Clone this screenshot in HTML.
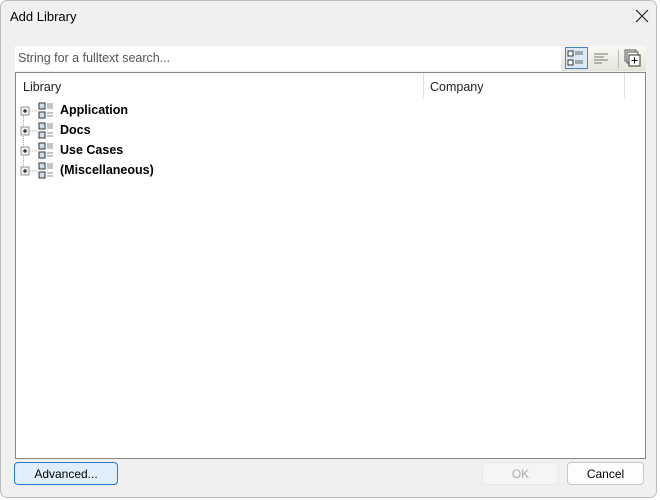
<!DOCTYPE html>
<html><head><style>
body{margin:0;width:660px;height:500px;background:#fff;font-family:"Liberation Sans",sans-serif;overflow:hidden;position:relative}
.win{position:absolute;left:0;top:0;width:657px;height:498px;background:#f0f0f0;border:1px solid #bdbdbd;border-radius:7px;box-sizing:border-box}
.title{position:absolute;left:9px;top:8px;font-size:13px;color:#000}
.x{position:absolute;left:634px;top:8px}
.search{position:absolute;left:14px;top:45px;width:631px;height:25px;background:#fff;box-sizing:border-box}
.search span{position:absolute;left:3px;top:5px;font-size:12.5px;color:#555}
.tb{position:absolute;left:560px;top:45px;width:85px;height:25px;background:linear-gradient(#fafaf5,#e4e4d8)}
.list{position:absolute;left:14px;top:71px;width:631px;height:387px;background:#fff;border:1px solid #888;box-sizing:border-box}
.hdr{position:absolute;top:0;height:26px;font-size:12.5px;color:#222}
.row{position:absolute;left:3px;font-size:12.5px;font-weight:bold;height:18px;white-space:nowrap;width:300px}
.row .t{position:absolute;left:41px;top:1px}
.btn{position:absolute;top:461px;height:23px;border:1px solid #c8c8c8;border-radius:4px;background:#fdfdfd;font-size:12px;text-align:center;line-height:22px;box-sizing:border-box}
</style></head><body>
<div class="win">
<div class="title">Add Library</div>
<svg class="x" width="14" height="14"><path d="M1 1L13 13M13 1L1 13" stroke="#222" stroke-width="1.2"/></svg>
<div class="search"><span>String for a fulltext search...</span></div>
<div class="tb">
<div style="position:absolute;left:4px;top:1px;width:23px;height:22px;border:1px solid #4a7fd0;background:#dde8f6;box-sizing:border-box"></div>
<svg style="position:absolute;left:6px;top:4px" width="20" height="18"><rect x="1" y="1" width="5" height="5" fill="#fff" stroke="#333"/><rect x="1" y="10" width="5" height="5" fill="#fff" stroke="#333"/><path d="M8 2h8M8 4h8M8 11h8M8 13h8" stroke="#666"/></svg>
<svg style="position:absolute;left:33px;top:7px" width="16" height="12"><path d="M0 1h14M0 4h10M0 7h14M0 10h8" stroke="#777"/></svg>
<div style="position:absolute;left:57px;top:4px;width:1px;height:18px;background:#bbb"></div>
<svg style="position:absolute;left:63px;top:3px" width="18" height="19"><rect x="1" y="1" width="11" height="11" fill="#eee" stroke="#555"/><rect x="3" y="3" width="11" height="11" fill="#f3f3f3" stroke="#555"/><rect x="5" y="6" width="11" height="11" fill="#fff" stroke="#333"/><path d="M10.5 8.5v6M7.5 11.5h6" stroke="#000"/></svg>
</div>
<div class="list">
<div class="hdr" style="left:0;width:407px;border-right:1px solid #e0e0e0"><span style="position:absolute;left:7px;top:7px">Library</span></div>
<div class="hdr" style="left:408px;width:200px;border-right:1px solid #e0e0e0"><span style="position:absolute;left:6px;top:7px">Company</span></div>
<div style="position:absolute;left:7px;top:42px;width:0;height:60px;border-left:1px dotted #aaa"></div>
<div class="row" style="top:29px"><svg width="40" height="18"><rect x="2" y="5" width="8" height="8" fill="#eee" stroke="#999"/><path d="M4 9h4M6 7v4" stroke="#000"/><path d="M11 9h8" stroke="#aaa" stroke-dasharray="1 1"/><rect x="20" y="1" width="6" height="6" fill="#cde" stroke="#333"/><rect x="20" y="10" width="6" height="6" fill="#cde" stroke="#333"/><path d="M28 2h6M28 4h6M28 6h6M28 11h6M28 14h6" stroke="#888"/></svg><span class="t">Application</span></div>
<div class="row" style="top:49px"><svg width="40" height="18"><rect x="2" y="5" width="8" height="8" fill="#eee" stroke="#999"/><path d="M4 9h4M6 7v4" stroke="#000"/><path d="M11 9h8" stroke="#aaa" stroke-dasharray="1 1"/><rect x="20" y="1" width="6" height="6" fill="#cde" stroke="#333"/><rect x="20" y="10" width="6" height="6" fill="#cde" stroke="#333"/><path d="M28 2h6M28 4h6M28 6h6M28 11h6M28 14h6" stroke="#888"/></svg><span class="t">Docs</span></div>
<div class="row" style="top:69px"><svg width="40" height="18"><rect x="2" y="5" width="8" height="8" fill="#eee" stroke="#999"/><path d="M4 9h4M6 7v4" stroke="#000"/><path d="M11 9h8" stroke="#aaa" stroke-dasharray="1 1"/><rect x="20" y="1" width="6" height="6" fill="#cde" stroke="#333"/><rect x="20" y="10" width="6" height="6" fill="#cde" stroke="#333"/><path d="M28 2h6M28 4h6M28 6h6M28 11h6M28 14h6" stroke="#888"/></svg><span class="t">Use Cases</span></div>
<div class="row" style="top:89px"><svg width="40" height="18"><rect x="2" y="5" width="8" height="8" fill="#eee" stroke="#999"/><path d="M4 9h4M6 7v4" stroke="#000"/><path d="M11 9h8" stroke="#aaa" stroke-dasharray="1 1"/><rect x="20" y="1" width="6" height="6" fill="#cde" stroke="#333"/><rect x="20" y="10" width="6" height="6" fill="#cde" stroke="#333"/><path d="M28 2h6M28 4h6M28 6h6M28 11h6M28 14h6" stroke="#888"/></svg><span class="t">(Miscellaneous)</span></div>
</div>
<div class="btn" style="left:13px;width:104px;border:1px solid #2a78c8;background:#e0eef9">Advanced...</div>
<div class="btn" style="left:481px;width:77px;color:#aaa;border-color:#e8e8e8;background:#f5f5f5">OK</div>
<div class="btn" style="left:566px;width:77px">Cancel</div>
</div>
</body></html>
